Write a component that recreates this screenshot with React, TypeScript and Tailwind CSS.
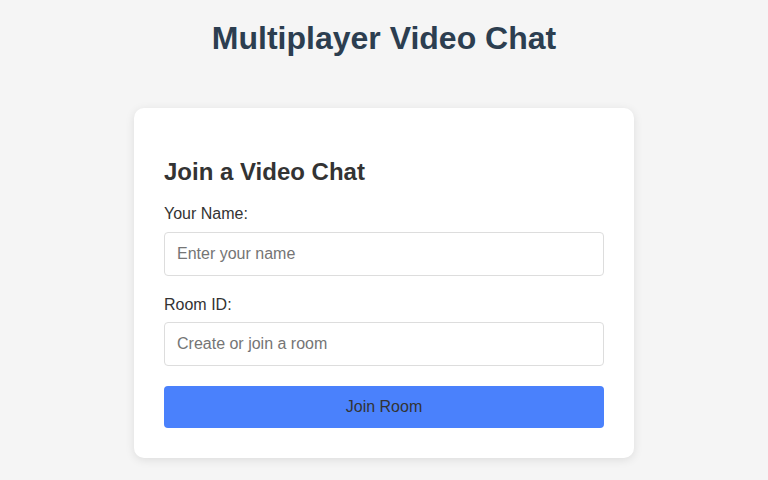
import { useState } from "react";

export default function App() {
  const [name, setName] = useState("");
  const [roomId, setRoomId] = useState("");

  return (
    <div className="min-h-[480px] bg-[#f5f5f5] pt-[20px] font-['Liberation_Sans',Arial,sans-serif] text-[#333]">
      <h1 className="text-center text-[32px] leading-[36.8px] font-bold text-[#2c3e50]">
        Multiplayer Video Chat
      </h1>

      <div className="mx-auto mt-[51px] w-[500px] rounded-[10px] bg-white p-[30px] shadow-[0_2px_10px_rgba(0,0,0,0.1)]">
        <h2 className="mt-[20px] mb-[20px] text-[24px] leading-[27.6px] font-bold text-[#333]">
          Join a Video Chat
        </h2>

        <div className="mb-[20px]">
          <label htmlFor="name" className="mb-[8px] block text-[16px] leading-[18.4px]">
            Your Name:
          </label>
          <input
            id="name"
            type="text"
            value={name}
            onChange={(e) => setName(e.target.value)}
            placeholder="Enter your name"
            className="block w-full rounded-[4px] border border-[#ddd] bg-white px-[12px] py-[12px] text-[16px] leading-[18px] outline-none placeholder:text-[#757575]"
          />
        </div>

        <div className="mb-[20px]">
          <label htmlFor="room" className="mb-[8px] block text-[16px] leading-[18.4px]">
            Room ID:
          </label>
          <input
            id="room"
            type="text"
            value={roomId}
            onChange={(e) => setRoomId(e.target.value)}
            placeholder="Create or join a room"
            className="block w-full rounded-[4px] border border-[#ddd] bg-white px-[12px] py-[12px] text-[16px] leading-[18px] outline-none placeholder:text-[#757575]"
          />
        </div>

        <button
          type="button"
          className="block w-full rounded-[4px] bg-[#4a81fc] py-[12px] text-[16px] leading-[18px] text-[#333]"
        >
          Join Room
        </button>
      </div>
    </div>
  );
}
